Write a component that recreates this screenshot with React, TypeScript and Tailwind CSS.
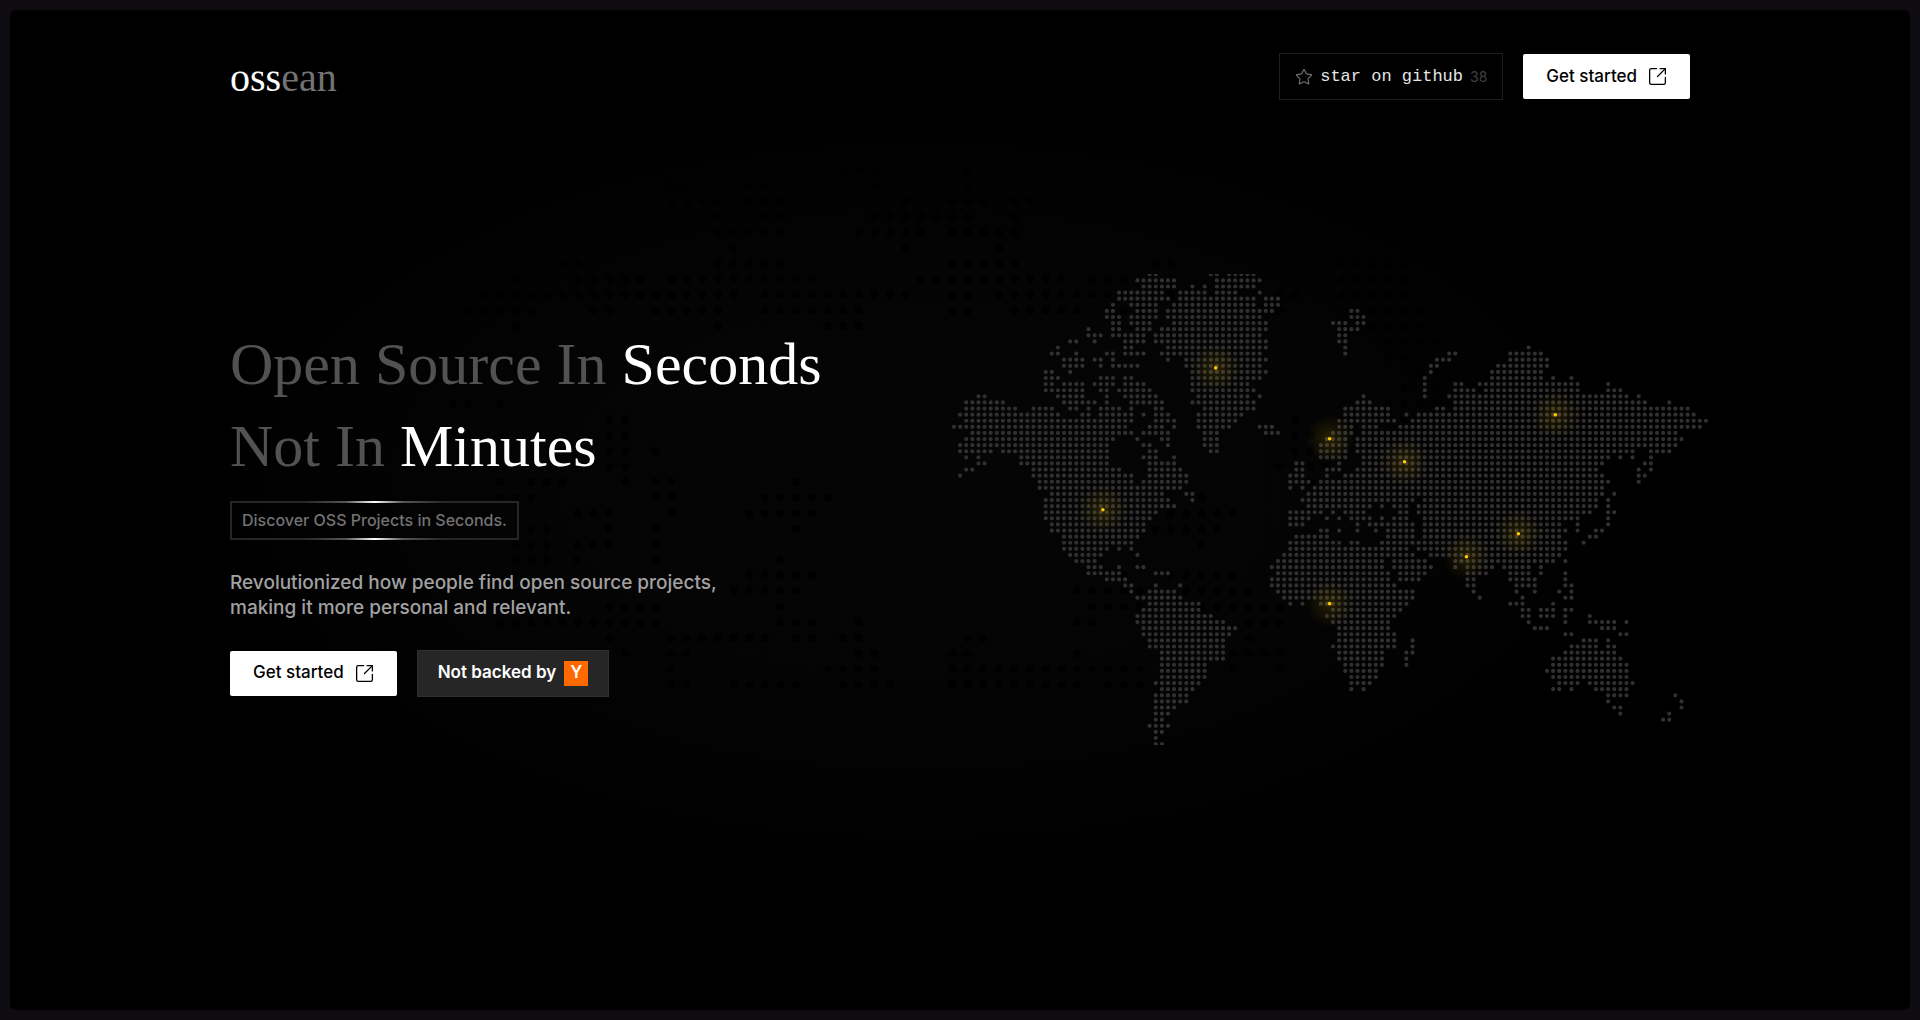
import React from "react";
import { SquareArrowOutUpRight, Star } from "lucide-react";

/* Land cells of the world map, one entry per grid row, as column runs. */
const LAND: string[] = [
  "32-33 42-43 45-49",
  "30-36 43-50",
  "31-36 39 41 43-49",
  "27-34 37-41 43-46 50",
  "27-35 37-49 51-53",
  "26 29-33 36-49 51-53",
  "25-26 30-33 35-52 65-66",
  "25-27 29-33 35-50 65-67",
  "26-27 29-32 36-51 62-64 66-67",
  "22 26-27 30-32 34-51 63-66",
  "22-24 26-31 33-50 63-64",
  "19-20 23 28-31 33-51 63-64",
  "17 28-29 35-51 64 94",
  "16-17 20 25-26 28-31 34-50 64 81-82 91-96",
  "18-21 23-24 26 35 38-51 79-81 91-97",
  "18-21 24 26-30 38-50 78-79 89-97",
  "15-16 19 39-51 78 88-96",
  "15-17 24-26 28-29 39-50 77 88-96 98 101",
  "15-16 18-21 23-26 28-31 39-48 77 82-83 86-102 107",
  "15-21 24-25 27-32 39-49 77 82-85 87-102 107-109",
  "4-5 17-21 25 28-33 40-48 50 67 77 81-110 112",
  "2-8 18-23 25 29-34 39-49 66-68 82-113 117",
  "2-10 13-16 19-20 22 24-27 29 33-34 41-49 64-71 79-80 82-120",
  "1-17 21-22 24-29 31 33-35 40-47 64-71 74 76-121",
  "2-29 33-36 40-46 63-72 75-123",
  "0-28 32-34 36 40-45 50-52 63-65 67-69 73-122",
  "3-29 31-35 41-43 51-53 62-65 67-118",
  "2-26 30 34-35 41-43 61-64 66-119",
  "1-25 31-32 35 41-43 60-64 66-118",
  "1-6 8-25 32-33 42-43 60-64 66-111 114-117",
  "2 4 11-25 31-33 36 60-64 67-107 109 111 114",
  "4-5 11-25 32-36 56-57 63 67-106 113-114",
  "2-3 13-27 32-37 56-57 61-63 66-105 112 114",
  "1 13-29 32-38 55-57 61 64-106 112-113",
  "14-29 31-38 55-58 60-107 112",
  "14-37 55 57 59-106",
  "16-34 38-39 58-106 108",
  "15-35 39 57-75 77-105 107",
  "15-36 58-68 70 72-74 76-105 107",
  "15-33 55-60 62 64-67 73-74 76-104 107-108",
  "15-32 55-58 61 63 65-68 70 72-74 77-102 107",
  "16-31 55-57 66 68-75 77-99 102 107",
  "16-31 60-61 63 66 69 71-75 77-100 102 105-106",
  "18-30 56-61 71-75 77-99 104-105",
  "18-29 55-63 65-66 70-100 103",
  "18-25 27 29 55-74 76-100",
  "19-24 30 54-75 78-99",
  "20-23 53-70 72-77 82-98 100",
  "22-24 27 30-31 52-70 72-78 82 84-88 90-94 96",
  "22-27 33-35 53-71 73-77 84-87 91-94 96 100",
  "25-28 52-71 73-76 84-85 91-95 100",
  "28-29 33 37 52-72 84-85 92-95 100-101",
  "29 32-36 53-75 85 92 95 99 101",
  "30-37 54-75 86 93 100-101",
  "32-40 55 57 60-74 91-93 98",
  "31-40 62-73 93-94 96-98 100-101",
  "30-42 61-72 93-94 96-98 100 104",
  "30-44 62-71 94 100 104-108 110",
  "31-46 63-71 95-97 106-108",
  "31-45 63-72 100-101 109-110",
  "32-44 63-72 75 103-105 107",
  "32-44 62-72 75 101-105 107-108",
  "34-44 63-70 74-75 100-108",
  "34-44 63-70 74 98-109",
  "34-41 64-70 74 98-110",
  "34-41 64-69 97-110",
  "34-41 65-69 98-110",
  "33-40 65-68 99-102 104-111",
  "34-39 65 67 98-99 101 105-110",
  "33-38 107-110 118",
  "33-38 107 119",
  "33-36 108-109 119",
  "33-35 109 117",
  "33-34 116-117",
  "32-35",
  "33-34",
  "33",
  "33-34",
];

/* Faint backdrop cells behind the hero. */
const BACKDROP: string[] = [
  "25-27 33",
  "14-15 19-20 27 33",
  "14-17 19-21 29 32-34 36-37",
  "17 20-21 27-33 36",
  "17-21 26-30 32-36",
  "18 29 35",
  "7-8 17-21 32-36 45-46 57-61",
  "4 8-12 14-23 30-39 41-43 57-61",
  "2-18 20-29 32-33 35-42 46 53-54 57-61",
  "1-5 9-10 13-17 20-26 32-33 36-40 43-44 53 59-62",
  "4 17 24-26 59-62",
  "60-63",
  "60-61",
  "62-63",
  "61 63",
  "0-1 3 60-63",
  "10-11 54 61",
  "0-1 3 10-11 54-55",
  "10-11 13 54-55",
  "10-11 53 55-56",
  "3 5-7 11 13-14 22 55",
  "3-5 13-14 20-24 48",
  "8-10 14 19-23 46-50",
  "5-6 10 13 22 45-49",
  "4-6 8-10 13 48",
  "4-6 8 13 21",
  "19-23 43 46-50",
  "18-22 40-44 47-51",
  "10-13 21 41-44 48-53",
  "3-13 21-23 26 40-41 51-53",
  "10 14-20 22-23 25-26 33-34 51",
  "11 14-15 26-27 32-33 40 50-53",
  "14 24-27 32-36 37-44 50 53",
  "14-15 18-22 25-28 32-40 42-44",
];

/* Builds zero-length strokes; round caps turn each of them into a dot. */
function dots(rows: string[], pitchX: number, pitchY: number, x0: number, y0: number) {
  let d = "";
  rows.forEach((row, r) => {
    row.split(" ").forEach((run) => {
      const [from, to = from] = run.split("-").map(Number);
      for (let c = from; c <= to; c++) {
        d += `M${(x0 + c * pitchX).toFixed(2)} ${(y0 + r * pitchY).toFixed(2)}h0`;
      }
    });
  });
  return d;
}

const LAND_PATH = dots(LAND, 6.12, 6.108, 3, 0.3);
const BACKDROP_PATH = dots(BACKDROP, 15.6, 15.6, 8, 8);

const CITIES: [number, number][] = [
  [265, 94],
  [379, 165],
  [454, 188],
  [605, 141],
  [152, 236],
  [516, 283],
  [568, 260],
  [379, 330],
];

function WorldMap() {
  return (
    <svg viewBox="0 0 760 472" className="block w-full" role="img" aria-label="World map">
      <defs>
        <radialGradient id="glow">
          <stop offset="0" stopColor="#ffc800" stopOpacity="0.16" />
          <stop offset="0.4" stopColor="#ffc800" stopOpacity="0.08" />
          <stop offset="1" stopColor="#ffc800" stopOpacity="0" />
        </radialGradient>
      </defs>
      <path d={LAND_PATH} stroke="#303030" strokeWidth="4.2" strokeLinecap="round" />
      {CITIES.map(([x, y]) => (
        <g key={`${x}-${y}`}>
          <circle cx={x} cy={y} r="24" fill="url(#glow)" />
          <circle cx={x} cy={y} r="1.8" fill="#ffc800" />
        </g>
      ))}
    </svg>
  );
}

function GetStarted() {
  return (
    <button
      type="button"
      className="flex h-[45px] items-center gap-[10px] rounded-[2px] bg-white pr-[22px] pl-[23px] text-[17px] font-medium whitespace-nowrap text-black"
    >
      Get started
      <SquareArrowOutUpRight className="size-[21px]" strokeWidth={1.5} aria-hidden="true" />
    </button>
  );
}

function Header() {
  return (
    <header className="flex items-center justify-between">
      <a href="#" className="pt-[2px] font-['Liberation_Serif',serif] text-[40px] leading-10 text-white">
        oss<span className="text-[#737373]">ean</span>
      </a>
      <nav className="flex items-center gap-5">
        <a
          href="#"
          className="flex h-[47px] items-center gap-[7px] border border-[#1f1f1f] px-[15px] whitespace-nowrap"
        >
          <Star className="size-[18px] text-[#737373]" strokeWidth={1.5} aria-hidden="true" />
          <span className="font-['Liberation_Mono',monospace] text-[17px] text-[#e5e5e5]">star on github</span>
          <span className="text-sm text-[#404040]">38</span>
        </a>
        <GetStarted />
      </nav>
    </header>
  );
}

function Badge() {
  return (
    <div className="relative mt-[14px] w-fit border-2 border-[#262626] px-[10px] py-[5px] text-base leading-[25px] font-medium text-[#737373]">
      <span className="absolute inset-x-1/4 -top-[2px] h-[2px] bg-[linear-gradient(90deg,transparent,#555_30%,#fff_50%,#555_70%,transparent)]" />
      <span className="absolute inset-x-1/4 -bottom-[2px] h-[2px] bg-[linear-gradient(90deg,transparent,#555_30%,#fff_50%,#555_70%,transparent)]" />
      Discover OSS Projects in Seconds.
    </div>
  );
}

function Hero() {
  return (
    <section className="mt-[174px] flex items-center justify-between">
      <div>
        <h1 className="font-['Liberation_Serif',serif] text-[60px] leading-[82px] whitespace-nowrap text-[#525252]">
          Open Source In <span className="text-white">Seconds</span>
          <br />
          Not In <span className="text-white">Minutes</span>
        </h1>
        <Badge />
        <p className="mt-[30px] text-[19px] leading-[25px] font-medium text-[#a1a1a1]">
          Revolutionized how people find open source projects,
          <br />
          making it more personal and relevant.
        </p>
        <div className="mt-[30px] flex items-center gap-5">
          <GetStarted />
          <button
            type="button"
            className="flex h-[47px] items-center gap-2 border border-[#303030] bg-[#262626] px-5 text-[17px] font-semibold whitespace-nowrap text-white"
          >
            Not backed by
            <span className="flex h-[25px] w-6 items-center justify-center bg-[#ff6900]">Y</span>
          </button>
        </div>
      </div>
      <div className="-mr-5 w-[52%]">
        <WorldMap />
      </div>
    </section>
  );
}

export default function App() {
  return (
    <div className="min-h-screen bg-[#0e0c11] p-[10px] font-[Inter,sans-serif]">
      <main className="relative min-h-[calc(100vh-20px)] overflow-hidden rounded-md bg-black bg-[radial-gradient(ellipse_at_48%_48%,#050505_0%,#040404_30%,#000_54%)] px-6">
        <svg
          viewBox="0 0 1000 530"
          className="absolute top-[152px] left-[435px] w-[1000px]"
          aria-hidden="true"
        >
          <path d={BACKDROP_PATH} stroke="#000000" strokeWidth="8" strokeLinecap="round" />
        </svg>
        <div className="relative mx-auto max-w-[1460px] pt-[43px]">
          <Header />
          <Hero />
        </div>
      </main>
    </div>
  );
}
